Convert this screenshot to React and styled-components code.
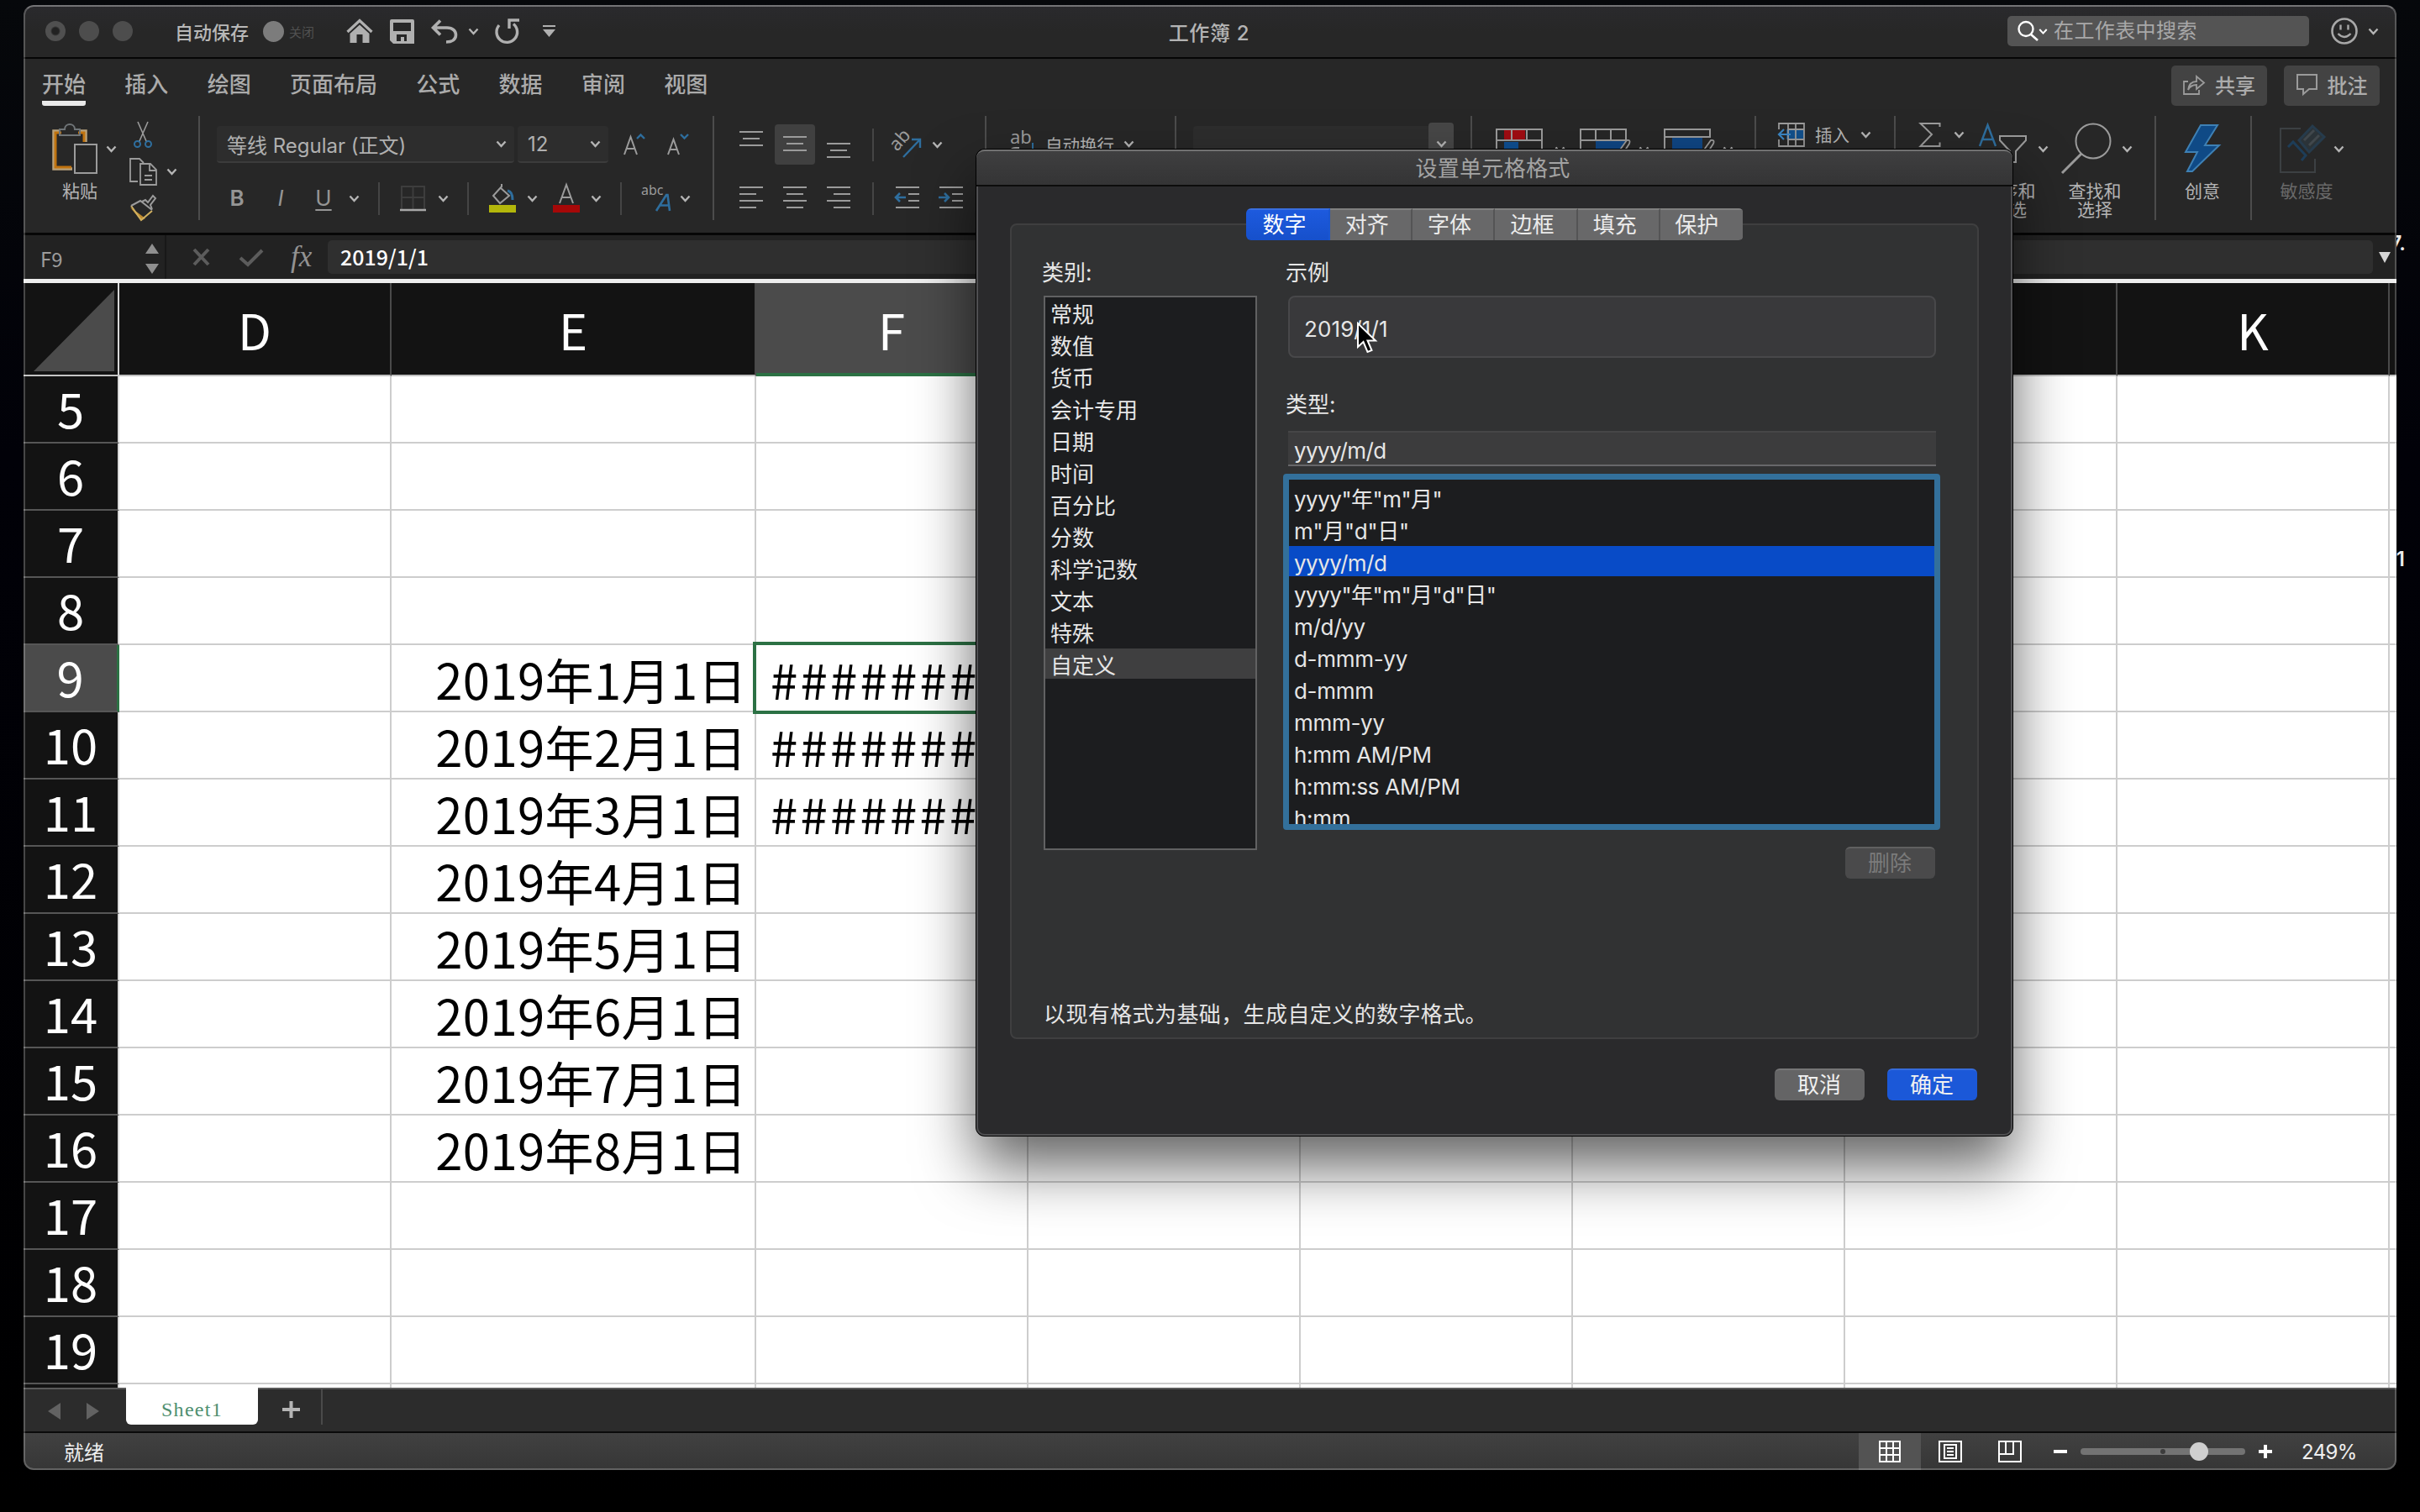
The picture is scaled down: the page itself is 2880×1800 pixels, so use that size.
import styled, { createGlobalStyle } from "styled-components";

const GlobalStyle = createGlobalStyle`
  * {
    box-sizing: border-box;
  }
  body {
    margin: 0;
    background: #010105;
    font-family: "Inter", "Noto Sans CJK SC", sans-serif;
  }
  svg {
    display: block;
    flex: none;
    overflow: visible;
  }
`;

/* ---------- desktop and window ---------- */

const Desktop = styled.div`
  position: relative;
  width: 2880px;
  height: 1800px;
  overflow: hidden;
  background: linear-gradient(#06080b, #010108 30%, #000);
`;

const DesktopLabel = styled.span`
  position: absolute;
  right: ${(p) => p.$right}px;
  top: ${(p) => p.$top}px;
  font-size: 24px;
  line-height: 30px;
  font-weight: 600;
  color: #ececec;
`;

const Window = styled.div`
  position: absolute;
  z-index: 0;
  left: 28px;
  top: 6px;
  width: 2824px;
  height: 1744px;
  display: flex;
  flex-direction: column;
  overflow: hidden;
  border-radius: 12px;
  background: #272727;

  &::after {
    content: "";
    position: absolute;
    inset: 0;
    border: 2px solid rgba(255, 255, 255, 0.22);
    border-top-color: rgba(255, 255, 255, 0.35);
    border-radius: 12px;
    pointer-events: none;
  }
`;

/* ---------- title bar ---------- */

const TitleBar = styled.div`
  display: flex;
  align-items: center;
  flex: none;
  height: 64px;
  padding-left: 26px;
  border-bottom: 2px solid #050505;
  background: linear-gradient(#2a2a2d, #272727 50%);
`;

const Light = styled.span`
  width: 24px;
  height: 24px;
  margin-right: 16px;
  border-radius: 50%;
  background: ${(p) =>
    p.$dot ? "radial-gradient(#222 4px, #505050 6px)" : "#4d4d4d"};
`;

const AutoSave = styled.span`
  width: 92px;
  margin-left: 34px;
  font-size: 22px;
  font-weight: 500;
  color: #b8b8b8;
`;

const Knob = styled.span`
  width: 25px;
  height: 25px;
  margin-left: 13px;
  border-radius: 50%;
  background: #7c7c7c;
`;

const KnobText = styled.span`
  width: 32px;
  margin: 0 36px 0 6px;
  font-size: 15px;
  color: #515151;
`;

const Title = styled.div`
  width: 120px;
  margin-left: 718px;
  margin-right: 2px;
  text-align: center;
  font-size: 24px;
  font-weight: 500;
  letter-spacing: 0.7px;
  color: #b4b4b4;
  white-space: pre;
`;

const Search = styled.div`
  display: flex;
  align-items: center;
  width: 359px;
  height: 36px;
  margin-left: 888px;
  padding-left: 11px;
  border-radius: 5px;
  background: #545454;
  font-size: 24px;
  color: #a8a8a8;
`;

const SearchText = styled.span`
  margin-left: 7px;
  line-height: 36px;
  letter-spacing: 0.4px;
`;

const Shift = styled.span`
  flex: none;
  margin-left: ${(p) => p.$ml}px;
`;

/* ---------- ribbon ---------- */

const TabRow = styled.div`
  display: flex;
  flex: none;
  height: 60px;
  padding-left: 22px;
  padding-top: 8px;
`;

const RibbonTab = styled.span`
  height: 48px;
  margin-right: 46.3px;
  border-bottom: 6px solid ${(p) => (p.$active ? "#e9e9e9" : "transparent")};
  border-radius: 3px;
  font-size: 26px;
  line-height: 46px;
  font-weight: 500;
  color: #ababab;
`;

const TabSpacer = styled.div`
  flex: 1;
`;

const PillButton = styled.div`
  display: flex;
  align-items: center;
  justify-content: center;
  gap: 12px;
  width: 114px;
  height: 48px;
  margin-right: 20px;
  padding-bottom: 3px;
  border-radius: 5px;
  background: #434343;
  font-size: 24px;
  font-weight: 500;
  color: #acacac;
`;

const Ribbon = styled.div`
  display: flex;
  flex: none;
  height: 150px;
  padding-top: 8px;
  border-bottom: 3px solid #060606;
`;

const Group = styled.div`
  flex: none;
  width: ${(p) => p.$w}px;
  height: 124px;
  display: flex;
  flex-direction: ${(p) => (p.$row ? "row" : "column")};
  border-right: ${(p) => (p.$last ? "none" : "2px solid #4c4c4c")};
`;

const Line = styled.div`
  display: flex;
  align-items: center;
  flex: none;
  height: ${(p) => p.$h || 68}px;
`;

const Stack = styled.div`
  display: flex;
  flex-direction: column;
  width: ${(p) => p.$w}px;
  margin-left: ${(p) => p.$ml || 0}px;
  padding-top: ${(p) => p.$pt || 0}px;
`;

const BigIcon = styled.div`
  display: flex;
  align-items: center;
  height: 60px;
  margin-bottom: 10px;
`;

const Caption = styled.span`
  margin-left: ${(p) => p.$ml || 0}px;
  width: ${(p) => p.$w || 64}px;
  text-align: center;
  font-size: ${(p) => p.$size || 21}px;
  line-height: 22px;
  color: ${(p) => (p.$dim ? "#696969" : "#b4b4b4")};
`;

const SmallText = styled.span`
  margin-left: ${(p) => p.$ml}px;
  font-size: 20.5px;
  color: #b4b4b4;
  white-space: nowrap;
`;

const Combo = styled.div`
  display: flex;
  align-items: center;
  justify-content: space-between;
  width: ${(p) => p.$w}px;
  height: 44px;
  margin-left: ${(p) => p.$ml}px;
  padding: 0 9px 0 12px;
  border-radius: 4px;
  border-bottom: 2px solid #3b3b3b;
  background: #2d2d2d;
  font-size: 24px;
  color: #b0b0b0;
`;

const ComboButton = styled.div`
  display: flex;
  align-items: center;
  justify-content: center;
  width: 30px;
  height: 50px;
  margin-right: -9px;
  border-radius: 4px;
  background: #474747;
`;

const Letter = styled.span`
  width: 20px;
  margin-left: ${(p) => p.$ml}px;
  text-align: center;
  font-size: 26px;
  line-height: 30px;
  font-family: "Inter", sans-serif;
  font-weight: ${(p) => (p.$bold ? 600 : 400)};
  font-style: ${(p) => (p.$italic ? "italic" : "normal")};
  text-decoration: ${(p) => (p.$underline ? "underline" : "none")};
  text-decoration-thickness: 2px;
  text-underline-offset: 4px;
  color: #959595;
`;

const Rule = styled.span`
  width: 2px;
  height: 39px;
  margin-left: ${(p) => p.$ml}px;
  background: #454545;
`;

const ActiveTool = styled.div`
  display: flex;
  align-items: center;
  justify-content: center;
  width: 48px;
  height: 48px;
  margin-left: 13px;
  border-radius: 4px;
  background: #404040;
`;

/* ---------- formula bar ---------- */

const FormulaBar = styled.div`
  display: flex;
  align-items: center;
  flex: none;
  height: 52px;
  background: #222;
`;

const NameBox = styled.div`
  display: flex;
  align-items: center;
  justify-content: space-between;
  width: 170px;
  height: 52px;
  padding: 3px 7px 0 20px;
  border-right: 2px solid #181818;
  font-family: "Noto Sans CJK SC", sans-serif;
  font-size: 24px;
  color: #9c9c9c;
`;

const Fx = styled.span`
  width: 34px;
  margin-left: 32px;
  font-family: "Liberation Serif", serif;
  font-style: italic;
  font-size: 35px;
  line-height: 44px;
  color: #929292;
`;

const FormulaInput = styled.div`
  width: 2434px;
  height: 40px;
  margin-left: 10px;
  padding-left: 15px;
  border-radius: 5px;
  background: #2f2f2f;
  font-family: "Noto Sans CJK SC", sans-serif;
  font-size: 25px;
  line-height: 38px;
  font-weight: 500;
  color: #fff;
`;

/* ---------- sheet ---------- */

const Sheet = styled.div`
  flex: none;
  height: 1320px;
  overflow: hidden;
  border-top: 5px solid #ededed;
  background: #fff;
  font-family: "Noto Sans CJK SC", sans-serif;
  font-size: 58px;
`;

const SheetRow = styled.div`
  display: flex;
`;

const Corner = styled.div`
  display: flex;
  flex: none;
  width: 114px;
  height: 111px;
  padding: 8px 0 0 12px;
  border-right: 2px solid #d8d8d8;
  border-bottom: 2px solid #c4c4c4;
  background: #131313;
`;

const ColumnHead = styled.div`
  flex: none;
  width: ${(p) => p.$w}px;
  height: 111px;
  border-right: 2px solid #4a4a4a;
  border-bottom: ${(p) =>
    p.$active ? "4px solid #2c7144" : "2px solid #c0c0c0"};
  background: ${(p) => (p.$active ? "#4b4b4b" : "#131313")};
  color: #fff;
  text-align: center;
  line-height: 110px;
`;

const RowHead = styled.div`
  flex: none;
  width: 114px;
  height: 80px;
  border-right: ${(p) =>
    p.$active ? "3px solid #2c7144" : "2px solid #d8d8d8"};
  border-bottom: 2px solid #565656;
  background: ${(p) => (p.$active ? "#4b4b4b" : "#131313")};
  color: #fff;
  text-align: center;
  line-height: 75px;
`;

const Cell = styled.div`
  position: relative;
  flex: none;
  width: ${(p) => p.$w}px;
  height: 80px;
  padding: ${(p) => (p.$hash ? "0 0 0 17px" : "0 9px 0 0")};
  border-right: 2px solid #cdcdcd;
  border-bottom: 2px solid #cdcdcd;
  color: #000;
  line-height: 81px;
  white-space: nowrap;
  text-align: ${(p) => (p.$hash ? "left" : "right")};
  letter-spacing: ${(p) => (p.$hash ? 3.3 : 0.4)}px;

  &::after {
    content: "";
    display: ${(p) => (p.$selected ? "block" : "none")};
    position: absolute;
    inset: -4px -2px -4px -4px;
    border: 4px solid #2c7144;
    z-index: 1;
  }
`;

/* ---------- sheet tabs and status bar ---------- */

const SheetTabs = styled.div`
  display: flex;
  flex: none;
  height: 52px;
  padding-left: 29px;
  border-top: 2px solid #5a5a5a;
  background: #2c2c2c;
`;

const SheetTab = styled.div`
  width: 157px;
  height: 44px;
  margin: -2px 0 0 31px;
  border-radius: 0 0 6px 6px;
  background: #fff;
  text-align: center;
  font-family: "Liberation Serif", serif;
  font-size: 24px;
  line-height: 53px;
  letter-spacing: 1.3px;
  color: #4f8f70;
`;

const TabEnd = styled.span`
  width: 2px;
  height: 42px;
  margin-left: 25px;
  background: #4a4a4a;
`;

const StatusBar = styled.div`
  display: flex;
  align-items: center;
  flex: none;
  height: 46px;
  padding: 0 50px 0 48px;
  border-top: 2px solid #0a0a0a;
  background: linear-gradient(#414141, #363636);
  color: #efefef;
  font-size: 24px;
`;

const Ready = styled.span`
  flex: 1;
  padding-bottom: 2px;
`;

const ViewButton = styled.div`
  display: flex;
  align-items: center;
  justify-content: center;
  width: 74px;
  height: 44px;
  background: ${(p) => (p.$active ? "#535353" : "none")};
`;

const Track = styled.div`
  display: flex;
  align-items: center;
  width: 196px;
  height: 8px;
  margin: 0 16px;
  border-radius: 4px;
  background: #737373;
`;

const TrackTick = styled.span`
  width: 6px;
  height: 6px;
  margin-left: 95px;
  border-radius: 50%;
  background: #3c3c3c;
`;

const Thumb = styled.span`
  width: 22px;
  height: 22px;
  margin-left: 29px;
  border-radius: 50%;
  background: #cfcfcf;
`;

const Percent = styled.span`
  width: 63px;
  margin-left: 35px;
  font-size: 24px;
  letter-spacing: -0.6px;
`;

/* ---------- dialog ---------- */

const Dialog = styled.div`
  position: absolute;
  z-index: 1;
  left: 1162px;
  top: 178px;
  width: 1233px;
  height: 1174px;
  border-radius: 10px;
  background: #2a2a2c;
  box-shadow:
    0 0 0 1px #000,
    0 36px 70px rgba(0, 0, 0, 0.62),
    inset 0 0 0 2px #505052;
`;

const DialogTitle = styled.div`
  height: 44px;
  padding-right: 4px;
  border-radius: 10px 10px 0 0;
  border-top: 2px solid #717171;
  border-bottom: 2px solid #0c0c0c;
  background: linear-gradient(#3f3f40, #343435);
  text-align: center;
  font-size: 26px;
  line-height: 42px;
  letter-spacing: 0.3px;
  color: #a3a3a3;
`;

const Segments = styled.div`
  position: relative;
  display: flex;
  width: 592px;
  height: 38px;
  margin: 26px auto 0;
  border-radius: 6px;
  overflow: hidden;
`;

const Segment = styled.div`
  flex: none;
  width: ${(p) => (p.$active ? 100 : 98.4)}px;
  padding-right: ${(p) => (p.$active ? 6 : 8)}px;
  border-top: 2px solid ${(p) => (p.$active ? "#3a6fe0" : "#808080")};
  border-right: 2px solid ${(p) => (p.$active ? "#1a56d0" : "#545455")};
  background: ${(p) =>
    p.$active ? "linear-gradient(#1d5ade, #1650cb)" : "#686869"};
  text-align: center;
  font-size: 26px;
  line-height: 35px;
  color: ${(p) => (p.$active ? "#fff" : "#ebebeb")};

  &:last-child {
    padding-right: 12px;
    border-right: none;
  }
`;

const Panel = styled.div`
  height: 971px;
  margin: -20px 40px 0;
  padding: 41px 38px 0;
  border: 2px solid #3f3f40;
  border-radius: 8px;
  background: #313233;
  color: #e6e6e6;
  font-size: 26px;
`;

const Columns = styled.div`
  display: flex;
  gap: 31px;
  height: 737px;
`;

const Label = styled.div`
  height: 30px;
  margin: ${(p) => p.$mt || 0}px 0 0 ${(p) => p.$ml || 0}px;
  line-height: 32px;
`;

const Categories = styled.div`
  width: 254px;
  height: 660px;
  margin-top: 13px;
  border: 2px solid #616162;
  background: #1c1d1f;
`;

const Option = styled.div`
  height: 36px;
  margin-bottom: 2px;
  padding-left: 6px;
  background: ${(p) => p.$bg || "none"};
  line-height: 42px;
  white-space: nowrap;
  letter-spacing: ${(p) => p.$ls || 0}px;
`;

const Sample = styled.div`
  width: 771px;
  height: 74px;
  margin: 13px 0 0 6px;
  padding-left: 17px;
  border: 2px solid #48484a;
  border-radius: 8px;
  background: #39393b;
  line-height: 75px;
  letter-spacing: 0.1px;
`;

const TypeInput = styled.div`
  width: 771px;
  height: 42px;
  margin: 17px 0 0 6px;
  padding-left: 7px;
  border-top: 2px solid #464647;
  border-bottom: 2px solid #67676a;
  background: #3c3c3d;
  line-height: 44px;
  letter-spacing: -0.6px;
`;

const Formats = styled.div`
  width: 782px;
  height: 424px;
  margin-top: 9px;
  padding-top: 3px;
  overflow: hidden;
  border: 7px solid #33709b;
  border-radius: 4px;
  background: #1c1d1f;
`;

const Button = styled.div`
  width: 107px;
  height: 38px;
  margin: ${(p) => (p.$delete ? "20px 0 0 669px" : 0)};
  padding-right: 1px;
  border-radius: 6px;
  border-top: 2px solid rgba(255, 255, 255, 0.12);
  background: ${(p) => p.$bg};
  text-align: center;
  font-size: 26px;
  line-height: 36px;
  color: ${(p) => p.$color || "#f0f0f0"};
`;

const Note = styled.div`
  margin-top: 146px;
  line-height: 31px;
  letter-spacing: 0.4px;
`;

const Actions = styled.div`
  display: flex;
  justify-content: flex-end;
  gap: 27px;
  padding: 35px 42px 0 0;
`;

const Pointer = styled.svg`
  position: absolute;
  z-index: 2;
  left: 1614px;
  top: 383px;
`;

/* ---------- icons ---------- */

const GREY = "#9b9b9b";
const BLUE = "#2e6e9e";

const Chevron = ({ ml = 0, color = "#b4b4b4", w = 13 }) => (
  <Shift $ml={ml}>
    <svg width={w} height={9} viewBox="0 0 13 9">
      <path d="M1.5 1.5L6.5 7L11.5 1.5" fill="none" stroke={color} strokeWidth="2.4" />
    </svg>
  </Shift>
);

const HomeIcon = () => (
  <svg width="32" height="30">
    <path d="M1.5 16L16 2.5L30.5 16" fill="none" stroke="#b0b0b0" strokeWidth="3.2" />
    <path d="M4.5 18L16 7.5L27.5 18V29H19.5V19H12.5V29H4.5Z" fill="#b0b0b0" />
  </svg>
);

const SaveIcon = () => (
  <svg width="29" height="29">
    <path
      d="M0 2Q0 0 2 0H27Q29 0 29 2V29H4L0 25ZM4 4V14H25V4ZM8 18V26H13V21H17V26H20V18Z"
      fill="#b0b0b0"
      fillRule="evenodd"
    />
  </svg>
);

const UndoIcon = () => (
  <svg width="32" height="29">
    <path
      d="M11 1.5L2.5 10L11 18.5M3 10H19C26 10 29.5 14 29.5 18.5C29.5 24 25 27 18 27"
      fill="none"
      stroke="#b0b0b0"
      strokeWidth="3.6"
    />
  </svg>
);

const RedoIcon = () => (
  <svg width="30" height="30">
    <path
      d="M5 8A12.3 12.3 0 1 0 22 6.5M17 12V2H29"
      fill="none"
      stroke="#b0b0b0"
      strokeWidth="3.4"
    />
  </svg>
);

const CustomizeIcon = () => (
  <svg width="15" height="14">
    <path d="M0 0H15V2H0ZM0 5H15L7.5 14Z" fill="#b0b0b0" />
  </svg>
);

const SearchIcon = () => (
  <svg width="26" height="24">
    <circle cx="11" cy="9.5" r="8.5" fill="none" stroke="#fff" strokeWidth="2.4" />
    <path d="M17 16L25 23" stroke="#fff" strokeWidth="2.6" />
  </svg>
);

const SmileIcon = () => (
  <svg width="32" height="32" fill="none" stroke="#a8a8a8">
    <circle cx="16" cy="16" r="14.5" strokeWidth="2.6" />
    <path d="M11.5 8.5V14.5M20.5 8.5V14.5M8.5 19Q16 27 23.5 19" strokeWidth="2.4" />
  </svg>
);

const ShareIcon = () => (
  <svg width="26" height="24" fill="none" stroke={GREY} strokeWidth="1.8">
    <path d="M6 8H1V23H19V18" />
    <path d="M6 18C7 11 11 8 16 8V2L25 9.5L16 17V12C11 12 8 14 6 18Z" />
  </svg>
);

const CommentIcon = () => (
  <svg width="25" height="25" fill="none" stroke={GREY} strokeWidth="2">
    <path d="M1 1H24V18H15L8 24V18H1Z" />
  </svg>
);

const PasteIcon = () => (
  <svg width="54" height="60" fill="none">
    <path d="M10 9H2V54H24M32 9H40V22" stroke="#b9a27c" strokeWidth="3.5" />
    <path d="M11 11H4V52H23M31 11H38V22" stroke="#c0730f" strokeWidth="3" />
    <path d="M9 14V7H15C15 -1 27 -1 27 7H33V14Z" stroke="#6f7477" strokeWidth="2" />
    <rect x="27" y="25" width="26" height="34" fill="#272727" stroke={GREY} strokeWidth="2" />
  </svg>
);

const CutIcon = () => (
  <svg width="22" height="32" fill="none">
    <path d="M5 1L15.5 25M17 1L6.5 25" stroke={GREY} strokeWidth="1.6" />
    <circle cx="4.5" cy="27.5" r="3.5" stroke={BLUE} strokeWidth="2" />
    <circle cx="17.5" cy="27.5" r="3.5" stroke={BLUE} strokeWidth="2" />
  </svg>
);

const CopyIcon = () => (
  <svg width="33" height="33" fill="none" stroke={GREY} strokeWidth="1.8">
    <path d="M10 28H1V1H12L17 6" />
    <path d="M13 7H25L32 14V32H13ZM24 7V15H32M18 21H27M18 26H27" />
  </svg>
);

const BrushIcon = () => (
  <svg width="32" height="31" fill="none">
    <path d="M1 15L7 19L19 28L14 30.5Z" fill="#c08a2c" />
    <path d="M2 13L14 30L27 19" stroke="#d0b060" strokeWidth="2" />
    <path d="M2 13L13 7L27 18M15 8L19 6L22 9L28 1L31 4L25 12L27 17" stroke={GREY} strokeWidth="2" />
  </svg>
);

const SizeIcon = ({ grow }) => (
  <svg width="28" height="28" fill="none">
    <path
      d={grow ? "M1 26L8.5 5L16 26M3.5 19H13.5" : "M2 26L8.5 8L15 26M4 20H13"}
      stroke={GREY}
      strokeWidth="2"
    />
    <path d={grow ? "M16 7L20.5 2.5L25 7" : "M17 2L21.5 6.5L26 2"} stroke={BLUE} strokeWidth="2.4" />
  </svg>
);

const BorderIcon = () => (
  <svg width="31" height="32" fill="none">
    <path d="M2 29V2H29V29M15.5 2V29M2 15H29" stroke="#3d3d3d" strokeWidth="2" />
    <path d="M0 30H31" stroke="#a8a8a8" strokeWidth="2.4" />
  </svg>
);

const FillIcon = () => (
  <svg width="32" height="34" fill="none">
    <path d="M13 4L24 14L13 23L5 14L15 3V0" stroke={GREY} strokeWidth="2" />
    <path d="M22 8Q28 9 28 19" stroke={BLUE} strokeWidth="3" />
    <rect y="25" width="32" height="9" fill="#b3b70b" />
  </svg>
);

const FontColorIcon = () => (
  <svg width="32" height="34" fill="none">
    <path d="M8 23L16 1L24 23M10.5 16H21.5" stroke={GREY} strokeWidth="2" />
    <rect y="25" width="32" height="9" fill="#a60808" />
  </svg>
);

const PhoneticIcon = () => (
  <svg width="36" height="34">
    <text x="0" y="13" fontFamily="Noto Sans" fontSize="16" fill={GREY}>abc</text>
    <path
      d="M18 32L30 13H31.5L34 32M23 25.5H33"
      fill="none"
      stroke={BLUE}
      strokeWidth="2.6"
    />
  </svg>
);

const LinesIcon = ({ lines }) => (
  <svg width="30" height="40" stroke={GREY} strokeWidth="2">
    {lines.map(([x1, x2, y]) => (
      <path key={y} d={`M${x1 + 1} ${y}H${x2 + 1}`} />
    ))}
  </svg>
);

const OrientIcon = () => (
  <svg width="34" height="34" fill="none">
    <text x="-1" y="20" transform="rotate(-48 8 18)" fontFamily="Noto Sans" fontSize="22" fill={GREY}>ab</text>
    <path d="M11 32L30 12M21 11H31V21" stroke={BLUE} strokeWidth="2.4" />
  </svg>
);

const IndentIcon = ({ right }) => (
  <svg width="30" height="40" fill="none">
    <path d="M1 7H29M16 15H29M16 23H29M1 31H29" stroke={GREY} strokeWidth="2" />
    <path
      d={right ? "M0 19H12M7 14L12 19L7 24" : "M13 19H1M6 14L1 19L6 24"}
      stroke={BLUE}
      strokeWidth="2.6"
    />
  </svg>
);

const WrapIcon = () => (
  <svg width="28" height="36" fill="none">
    <text x="0" y="17" fontFamily="Noto Sans" fontSize="22" fill={GREY}>ab</text>
    <path d="M11 22H6Q1 22 1 27T6 32H11" stroke={GREY} strokeWidth="2" />
    <path d="M27 16V27H16" stroke={BLUE} strokeWidth="2" />
  </svg>
);

const TableIcon = ({ kind }) => (
  <svg width="56" height="50" fill="none">
    {kind === "rules" && <path d="M10 1H35V14H10Z" fill="#a00c12" />}
    {kind === "rules" && <path d="M10 16H27V40H10Z" fill="#0f4f92" />}
    {kind === "table" && <path d="M19 14H55V48H19Z" fill="#0f4684" />}
    {kind === "style" && <path d="M10 10H46V48H10Z" fill="#0f4684" />}
    <path
      d={
        kind === "style"
          ? "M1 48V1H55V10H1"
          : "M1 48V1H55V48M1 14H55M19 1V14M37 1V14"
      }
      stroke={GREY}
      strokeWidth="2"
    />
    {kind !== "rules" && (
      <path d="M46 28L56 14Q61 13 59 18L50 32" fill="#272727" stroke={GREY} strokeWidth="1.8" />
    )}
  </svg>
);

const InsertCellsIcon = () => (
  <svg width="32" height="29" fill="none">
    <rect x="10" y="8" width="21" height="12" fill="#12508c" />
    <path d="M1 8V1H31V28H1V20M12 1V28M21 1V28M12 8H31M12 20H31" stroke={GREY} strokeWidth="1.8" />
    <path d="M15 14H1M7 8L1 14L7 20" stroke="#3b86c4" strokeWidth="2.2" />
  </svg>
);

const SigmaIcon = () => (
  <svg width="26" height="29" fill="none">
    <path d="M24.5 5V1H1.5L15 14L1.5 28H24.5V23.5" stroke={GREY} strokeWidth="2" />
  </svg>
);

const SortIcon = () => (
  <svg width="57" height="60" fill="none">
    <path d="M1 27L10.5 2L20 27M4 19H17" stroke={BLUE} strokeWidth="2.4" />
    <path d="M25 15H56V20L44 33V46H37V33L25 20Z" fill="#272727" stroke={GREY} strokeWidth="2" />
  </svg>
);

const FindIcon = () => (
  <svg width="60" height="60" fill="none" stroke={GREY} strokeWidth="2">
    <circle cx="38" cy="21" r="20.5" />
    <path d="M24 36L1 59" strokeWidth="3" />
  </svg>
);

const BoltIcon = () => (
  <svg width="42" height="58">
    <path
      d="M19 1H39L24 25H41L9 56H3L15 33H1Z"
      fill="#0f4a86"
      stroke="#3e80b4"
      strokeWidth="2"
    />
  </svg>
);

const SensitivityIcon = () => (
  <svg width="56" height="60" fill="none">
    <path d="M26 6H2V58H43V42" stroke="#3c4043" strokeWidth="2" />
    <path d="M11 28L17 22L32 38L27 44" stroke="#1d3d58" strokeWidth="3" />
    <path d="M24 20L40 3L54 16L36 34Z" fill="#2b3338" stroke="#263b4c" strokeWidth="3" />
    <path d="M30 20L42 8M36 26L48 14" stroke="#40474c" strokeWidth="3" />
  </svg>
);

const Spinner = () => (
  <svg width="16" height="48" fill="#8f8f8f">
    <path d="M8 6L16 18H0ZM0 30H16L8 42Z" />
  </svg>
);

const CancelIcon = () => (
  <svg width="21" height="20">
    <path d="M2 1L19 19M19 1L2 19" stroke="#5c5c5c" strokeWidth="4" />
  </svg>
);

const CheckIcon = () => (
  <svg width="30" height="21">
    <path d="M2 11L11 19L28 2" fill="none" stroke="#5c5c5c" strokeWidth="4" />
  </svg>
);

const NormalView = () => (
  <svg width="26" height="26" fill="none" stroke="#fff" strokeWidth="2">
    <path d="M1 1H25V25H1ZM9 1V25M17 1V25M1 9H25M1 17H25" />
  </svg>
);

const PageView = () => (
  <svg width="28" height="26" fill="none" stroke="#fff" strokeWidth="2">
    <path d="M1 1H27V25H1ZM7 5H21V21H7ZM10 9H18M10 13H18M10 17H18" />
  </svg>
);

const BreakView = () => (
  <svg width="28" height="26" fill="none" stroke="#fff" strokeWidth="2">
    <path d="M1 1H27V25H1ZM1 16H18V1M9 1V16" />
  </svg>
);

/* ---------- data ---------- */

const ribbonTabs = ["开始", "插入", "绘图", "页面布局", "公式", "数据", "审阅", "视图"];

const columns = [
  { name: "D", w: 324 },
  { name: "E", w: 434 },
  { name: "F", w: 324 },
  { name: "G", w: 324 },
  { name: "H", w: 324 },
  { name: "I", w: 324 },
  { name: "J", w: 324 },
  { name: "K", w: 324 },
  { name: "", w: 324 },
];

const rows = [5, 6, 7, 8, 9, 10, 11, 12, 13, 14, 15, 16, 17, 18, 19];

const categories = [
  "常规",
  "数值",
  "货币",
  "会计专用",
  "日期",
  "时间",
  "百分比",
  "分数",
  "科学记数",
  "文本",
  "特殊",
  "自定义",
];

const formats = [
  'yyyy"年"m"月"',
  'm"月"d"日"',
  "yyyy/m/d",
  'yyyy"年"m"月"d"日"',
  "m/d/yy",
  "d-mmm-yy",
  "d-mmm",
  "mmm-yy",
  "h:mm AM/PM",
  "h:mm:ss AM/PM",
  "h:mm",
];

const cellText = (col, row) => {
  if (col === "E" && row >= 9 && row <= 16) return `2019年${row - 8}月1日`;
  if (col === "F" && row >= 9 && row <= 11) return "########";
  return "";
};

/* ---------- sections ---------- */

function TopBar() {
  return (
    <TitleBar>
      <Light $dot />
      <Light />
      <Light />
      <AutoSave>自动保存</AutoSave>
      <Knob />
      <KnobText>关闭</KnobText>
      <HomeIcon />
      <Shift $ml={20}>
        <SaveIcon />
      </Shift>
      <Shift $ml={20}>
        <UndoIcon />
      </Shift>
      <Chevron ml={12} />
      <Shift $ml={19}>
        <RedoIcon />
      </Shift>
      <Shift $ml={27}>
        <CustomizeIcon />
      </Shift>
      <Title>工作簿 2</Title>
      <Search>
        <SearchIcon />
        <Chevron color="#fff" w={11} />
        <SearchText>在工作表中搜索</SearchText>
      </Search>
      <Shift $ml={26}>
        <SmileIcon />
      </Shift>
      <Chevron ml={12} />
    </TitleBar>
  );
}

function FontGroup() {
  return (
    <Group $w={612}>
      <Line>
        <Combo $w={354} $ml={20}>
          等线 Regular (正文)
          <Chevron />
        </Combo>
        <Combo $w={108} $ml={4}>
          12
          <Chevron />
        </Combo>
        <Shift $ml={18}>
          <SizeIcon grow />
        </Shift>
        <Shift $ml={23}>
          <SizeIcon />
        </Shift>
      </Line>
      <Line $h={60}>
        <Letter $ml={34} $bold>B</Letter>
        <Letter $ml={32} $italic>I</Letter>
        <Letter $ml={31} $underline>U</Letter>
        <Chevron ml={20} />
        <Rule $ml={22} />
        <Shift $ml={24}>
          <BorderIcon />
        </Shift>
        <Chevron ml={14} />
        <Rule $ml={22} />
        <Shift $ml={24}>
          <FillIcon />
        </Shift>
        <Chevron ml={13} />
        <Shift $ml={18}>
          <FontColorIcon />
        </Shift>
        <Chevron ml={13} />
        <Rule $ml={22} />
        <Shift $ml={23}>
          <PhoneticIcon />
        </Shift>
        <Chevron ml={10} />
      </Line>
    </Group>
  );
}

function AlignGroup() {
  return (
    <Group $w={324}>
      <Line>
        <Shift $ml={29}>
          <LinesIcon lines={[[0, 28, 5], [4, 24, 13], [0, 28, 21]]} />
        </Shift>
        <ActiveTool>
          <LinesIcon lines={[[0, 28, 11], [4, 24, 19], [0, 28, 27]]} />
        </ActiveTool>
        <Shift $ml={13}>
          <LinesIcon lines={[[0, 28, 19], [4, 24, 27], [0, 28, 35]]} />
        </Shift>
        <Rule $ml={25} />
        <Shift $ml={24}>
          <OrientIcon />
        </Shift>
        <Chevron ml={11} />
      </Line>
      <Line $h={60}>
        <Shift $ml={29}>
          <LinesIcon lines={[[0, 28, 7], [0, 20, 15], [0, 28, 23], [0, 20, 31]]} />
        </Shift>
        <Shift $ml={22}>
          <LinesIcon lines={[[0, 28, 7], [4, 24, 15], [0, 28, 23], [4, 24, 31]]} />
        </Shift>
        <Shift $ml={22}>
          <LinesIcon lines={[[0, 28, 7], [8, 28, 15], [0, 28, 23], [8, 28, 31]]} />
        </Shift>
        <Rule $ml={25} />
        <Shift $ml={25}>
          <IndentIcon />
        </Shift>
        <Shift $ml={22}>
          <IndentIcon right />
        </Shift>
      </Line>
    </Group>
  );
}

function RibbonBar() {
  return (
    <Ribbon>
      <Group $w={210} $row>
        <Stack $w={120} $ml={34} $pt={9}>
          <BigIcon>
            <PasteIcon />
            <Chevron ml={10} />
          </BigIcon>
          <Caption $w={66}>粘贴</Caption>
        </Stack>
        <Stack $w={56} $ml={-28} $pt={6}>
          <Shift $ml={5}>
            <CutIcon />
          </Shift>
          <Line $h={56}>
            <CopyIcon />
            <Chevron ml={11} />
          </Line>
          <BrushIcon />
        </Stack>
      </Group>

      <FontGroup />
      <AlignGroup />

      <Group $w={226}>
        <Line $h={67}>
          <Shift $ml={28}>
            <WrapIcon />
          </Shift>
          <SmallText $ml={14}>自动换行</SmallText>
          <Chevron ml={11} />
        </Line>
      </Group>

      <Group $w={352}>
        <Line>
          <Combo $w={310} $ml={20}>
            <span />
            <ComboButton>
              <Chevron />
            </ComboButton>
          </Combo>
        </Line>
      </Group>

      <Group $w={338}>
        <Line $h={80}>
          <Shift $ml={28}>
            <TableIcon kind="rules" />
          </Shift>
          <Chevron ml={14} />
          <Shift $ml={17}>
            <TableIcon kind="table" />
          </Shift>
          <Chevron ml={14} />
          <Shift $ml={17}>
            <TableIcon kind="style" />
          </Shift>
          <Chevron ml={14} />
        </Line>
      </Group>

      <Group $w={166}>
        <Line $h={44}>
          <Shift $ml={26}>
            <InsertCellsIcon />
          </Shift>
          <SmallText $ml={12}>插入</SmallText>
          <Chevron ml={13} />
        </Line>
      </Group>

      <Group $w={310} $row>
        <Line $h={44}>
          <Shift $ml={28}>
            <SigmaIcon />
          </Shift>
          <Chevron ml={15} />
        </Line>
        <Stack $w={82} $ml={17} $pt={9}>
          <BigIcon>
            <SortIcon />
            <Chevron ml={13} />
          </BigIcon>
          <Caption $ml={4}>排序和筛选</Caption>
        </Stack>
        <Stack $w={90} $ml={16} $pt={9}>
          <BigIcon>
            <FindIcon />
            <Chevron ml={12} />
          </BigIcon>
          <Caption $ml={8}>查找和选择</Caption>
        </Stack>
      </Group>

      <Group $w={114}>
        <Stack $w={60} $ml={34} $pt={9}>
          <BigIcon>
            <BoltIcon />
          </BigIcon>
          <Caption $w={42}>创意</Caption>
        </Stack>
      </Group>

      <Group $w={172} $last>
        <Stack $w={100} $ml={32} $pt={9}>
          <BigIcon>
            <SensitivityIcon />
            <Chevron ml={9} />
          </BigIcon>
          <Caption $dim $ml={1}>敏感度</Caption>
        </Stack>
      </Group>
    </Ribbon>
  );
}

function Grid() {
  return (
    <Sheet>
      <SheetRow>
        <Corner>
          <svg width="97" height="97">
            <path d="M96 0V97H0Z" fill="#4b4b4b" />
          </svg>
        </Corner>
        {columns.map((col, i) => (
          <ColumnHead key={i} $w={col.w} $active={col.name === "F"}>
            {col.name}
          </ColumnHead>
        ))}
      </SheetRow>
      {rows.map((row) => (
        <SheetRow key={row}>
          <RowHead $active={row === 9}>{row}</RowHead>
          {columns.map((col, i) => (
            <Cell
              key={i}
              $w={col.w}
              $hash={col.name === "F"}
              $selected={col.name === "F" && row === 9}
            >
              {cellText(col.name, row)}
            </Cell>
          ))}
        </SheetRow>
      ))}
      {/* sliver of the next row */}
      <SheetRow>
        <RowHead />
        {columns.map((col, i) => (
          <Cell key={i} $w={col.w} />
        ))}
      </SheetRow>
    </Sheet>
  );
}

function BottomBars() {
  return (
    <>
      <SheetTabs>
        <svg width="62" height="52" fill="#626262">
          <path d="M15 16V36L0 26ZM46 16V36L61 26Z" />
        </svg>
        <SheetTab>Sheet1</SheetTab>
        <Shift $ml={29}>
          <svg width="21" height="52">
            <path d="M10.5 14V34M0 24H21" stroke="#b5b5b5" strokeWidth="4" />
          </svg>
        </Shift>
        <TabEnd />
      </SheetTabs>
      <StatusBar>
        <Ready>就绪</Ready>
        <ViewButton $active>
          <NormalView />
        </ViewButton>
        <ViewButton>
          <Shift $ml={-4}>
            <PageView />
          </Shift>
        </ViewButton>
        <ViewButton>
          <Shift $ml={-10}>
            <BreakView />
          </Shift>
        </ViewButton>
        <Shift $ml={10}>
          <svg width="16" height="4">
            <rect width="16" height="4" fill="#fff" />
          </svg>
        </Shift>
        <Track>
          <TrackTick />
          <Thumb />
        </Track>
        <svg width="16" height="16">
          <path d="M8 0V16M0 8H16" stroke="#fff" strokeWidth="4" />
        </svg>
        <Percent>249%</Percent>
      </StatusBar>
    </>
  );
}

function FormatDialog() {
  return (
    <Dialog>
      <DialogTitle>设置单元格格式</DialogTitle>
      <Segments>
        <Segment $active>数字</Segment>
        <Segment>对齐</Segment>
        <Segment>字体</Segment>
        <Segment>边框</Segment>
        <Segment>填充</Segment>
        <Segment>保护</Segment>
      </Segments>
      <Panel>
        <Columns>
          <div>
            <Label $ml={-2}>类别:</Label>
            <Categories>
              {categories.map((name) => (
                <Option key={name} $bg={name === "自定义" && "#3f3f40"}>
                  {name}
                </Option>
              ))}
            </Categories>
          </div>
          <div>
            <Label $ml={3}>示例</Label>
            <Sample>2019/1/1</Sample>
            <Label $ml={3} $mt={40}>类型:</Label>
            <TypeInput>yyyy/m/d</TypeInput>
            <Formats>
              {formats.map((name) => (
                <Option
                  key={name}
                  $ls={name.startsWith("yyyy") ? -0.5 : -0.3}
                  $bg={name === "yyyy/m/d" && "#084bc7"}
                >
                  {name}
                </Option>
              ))}
            </Formats>
            <Button $delete $bg="#4a4a4b" $color="#7b7b7b">删除</Button>
          </div>
        </Columns>
        <Note>以现有格式为基础，生成自定义的数字格式。</Note>
      </Panel>
      <Actions>
        <Button $bg="#646465">取消</Button>
        <Button $bg="#1b58d8">确定</Button>
      </Actions>
    </Dialog>
  );
}

export default function App() {
  return (
    <Desktop>
      <GlobalStyle />
      <DesktopLabel $right={17} $top={275}>7.</DesktopLabel>
      <DesktopLabel $right={18} $top={651}>1</DesktopLabel>
      <Window>
        <TopBar />
        <TabRow>
          {ribbonTabs.map((tab, i) => (
            <RibbonTab key={tab} $active={i === 0}>
              {tab}
            </RibbonTab>
          ))}
          <TabSpacer />
          <PillButton>
            <ShareIcon />
            共享
          </PillButton>
          <PillButton>
            <CommentIcon />
            批注
          </PillButton>
        </TabRow>
        <RibbonBar />
        <FormulaBar>
          <NameBox>
            F9
            <Spinner />
          </NameBox>
          <Shift $ml={31}>
            <CancelIcon />
          </Shift>
          <Shift $ml={34}>
            <CheckIcon />
          </Shift>
          <Fx>fx</Fx>
          <FormulaInput>2019/1/1</FormulaInput>
          <Shift $ml={7}>
            <svg width="14" height="13">
              <path d="M0 0H14L7 13Z" fill="#d6d6d6" />
            </svg>
          </Shift>
        </FormulaBar>
        <Grid />
        <BottomBars />
      </Window>
      <FormatDialog />
      <Pointer width="26" height="40">
        <path
          d="M2 2V30L8.5 24L13.5 36L18.5 34L13.5 22.5H23Z"
          fill="#000"
          stroke="#fff"
          strokeWidth="2"
        />
      </Pointer>
    </Desktop>
  );
}
